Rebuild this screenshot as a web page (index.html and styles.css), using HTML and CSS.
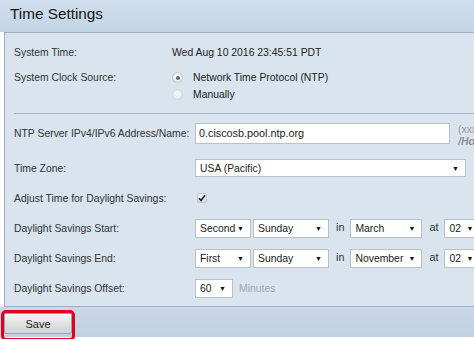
FILE: index.html
```html
<!DOCTYPE html>
<html>
<head>
<meta charset="utf-8">
<link rel="stylesheet" href="styles.css">
</head>
<body>
<div class="page">
  <div class="titlebar"><h1 class="title">Time Settings</h1></div>
  <div class="panel">
    <div class="sec-top">
      <div class="row-a">
        <span class="label-a">System Time:</span>
        <span class="value">Wed Aug 10 2016 23:45:51 PDT</span>
      </div>
      <div class="row-b">
        <span class="label-a">System Clock Source:</span>
        <div class="radios">
          <div class="radio-line"><span class="radio checked"></span><span>Network Time Protocol (NTP)</span></div>
          <div class="radio-line"><span class="radio"></span><span>Manually</span></div>
        </div>
      </div>
    </div>
    <div class="sep"></div>
    <div class="sec-bottom">
      <div class="row row-ntp">
        <span class="label">NTP Server IPv4/IPv6 Address/Name:</span>
        <span class="input">0.ciscosb.pool.ntp.org</span>
        <span class="hint"><span class="h1">(xxx.xxx.xxx.xxx</span><span class="h2">/Hostname)</span></span>
      </div>
      <div class="row">
        <span class="label">Time Zone:</span>
        <span class="select w-tz"><span>USA (Pacific)</span><span class="arr">▼</span></span>
      </div>
      <div class="row">
        <span class="label">Adjust Time for Daylight Savings:</span>
        <span class="check"><svg width="8" height="8" viewBox="0 0 8 8"><path d="M1 4.2 L3 6.4 L7 1.2" fill="none" stroke="#222" stroke-width="1.6"/></svg></span>
      </div>
      <div class="row">
        <span class="label">Daylight Savings Start:</span>
        <span class="select w-ord"><span>Second</span><span class="arr">▼</span></span>
        <span class="select w-day"><span>Sunday</span><span class="arr">▼</span></span>
        <span class="word">in</span>
        <span class="select w-mon"><span>March</span><span class="arr">▼</span></span>
        <span class="word">at</span>
        <span class="select w-hr"><span>02</span><span class="arr">▼</span></span>
      </div>
      <div class="row">
        <span class="label">Daylight Savings End:</span>
        <span class="select w-ord"><span>First</span><span class="arr">▼</span></span>
        <span class="select w-day"><span>Sunday</span><span class="arr">▼</span></span>
        <span class="word">in</span>
        <span class="select w-mon"><span>November</span><span class="arr">▼</span></span>
        <span class="word">at</span>
        <span class="select w-hr"><span>02</span><span class="arr">▼</span></span>
      </div>
      <div class="row">
        <span class="label">Daylight Savings Offset:</span>
        <span class="select w-off"><span>60</span><span class="arr">▼</span></span>
        <span class="unit">Minutes</span>
      </div>
    </div>
  </div>
  <div class="footer">
    <button class="save">Save</button>
    <span class="highlight"></span>
  </div>
</div>
</body>
</html>
```

FILE: styles.css
```css
html, body {
  margin: 0;
  padding: 0;
  background: #ffffff;
}
.page {
  position: relative;
  width: 474px;
  height: 339px;
  overflow: hidden;
  font-family: "Liberation Sans", Arial, sans-serif;
  font-size: 10.4px;
  color: #333;
}
.titlebar {
  height: 32px;
  background: linear-gradient(#d0deec, #c3d5e6);
}
.title {
  margin: 0;
  padding-left: 10px;
  font-size: 15.3px;
  font-weight: normal;
  line-height: 28px;
  color: #151515;
}
.panel {
  margin-left: 4px;
  margin-right: -20px;
  border: 1px solid #9eafc0;
  border-right: none;
  background: #d9e4ef;
}
.sec-top {
  padding: 11px 0 10px 9px;
}
.row-a {
  display: flex;
  align-items: center;
  height: 16px;
}
.row-b {
  display: flex;
  align-items: flex-start;
  margin-top: 9px;
}
.label-a {
  width: 158px;
  flex: none;
  line-height: 17px;
}
.value {
  color: #222;
}
.radios {
  display: flex;
  flex-direction: column;
}
.radio-line {
  display: flex;
  align-items: center;
  height: 17px;
  color: #222;
}
.radio {
  width: 9px;
  height: 9px;
  border-radius: 50%;
  border: 1px solid #c4c8cc;
  background: radial-gradient(circle at 50% 40%, #ffffff, #dadde0);
  margin-right: 10px;
  position: relative;
  flex: none;
}
.radio.checked::after {
  content: "";
  position: absolute;
  left: 2.5px;
  top: 2.5px;
  width: 4px;
  height: 4px;
  border-radius: 50%;
  background: #666;
}
.radio:not(.checked) {
  border-color: #d3d6da;
  background: radial-gradient(circle at 50% 40%, #f4f5f6, #e2e4e6);
}
.sep {
  margin-left: 9px;
  border-top: 1px solid #a9b6c3;
}
.sec-bottom {
  padding: 9px 0 7px 9px;
  display: flex;
  flex-direction: column;
  gap: 8px;
}
.row {
  display: flex;
  align-items: center;
  height: 22px;
  white-space: nowrap;
}
.row-ntp {
  align-items: flex-start;
  height: 26px;
}
.label {
  width: 181px;
  flex: none;
  line-height: 21px;
}
.input {
  box-sizing: border-box;
  width: 255px;
  height: 21px;
  line-height: 19px;
  padding-left: 3px;
  background: #fff;
  border: 1px solid #b9c0c8;
  color: #222;
  flex: none;
  font-size: 10.8px;
}
.hint {
  display: flex;
  flex-direction: column;
  margin-left: 8px;
  padding-top: 1px;
  line-height: 12px;
  font-size: 10.4px;
  color: #9a9a9a;
}
.hint .h2 {
  font-style: italic;
  font-weight: bold;
  color: #8a8f96;
}
.select {
  box-sizing: border-box;
  display: flex;
  align-items: center;
  justify-content: space-between;
  height: 19px;
  padding: 0 6px 0 4px;
  background: #fff;
  border: 1px solid #b9c0c8;
  color: #222;
  flex: none;
  font-size: 10.4px;
}
.arr {
  font-size: 7px;
  color: #111;
}
.w-tz { width: 271px; height: 18px; }
.w-ord { width: 56px; }
.w-day { width: 76px; margin-left: 2px; }
.w-mon { width: 72px; }
.w-hr { width: 36px; }
.w-off { width: 38px; }
.word {
  padding: 0 6px 0 7px;
  margin-top: -2px;
  color: #333;
  font-size: 10.8px;
}
.unit {
  margin-left: 6px;
  color: #a3a8ae;
}
.check {
  box-sizing: border-box;
  width: 10px;
  height: 10px;
  margin-left: 2px;
  border: 1px solid #c0c4c8;
  background: linear-gradient(#f4f4f4, #dcdcdc);
  border-radius: 2px;
  display: flex;
  align-items: center;
  justify-content: center;
}
.footer {
  position: relative;
  height: 30px;
  background: linear-gradient(#c9d8e7, #bfd1e3);
  padding-left: 4px;
  padding-top: 6px;
  box-sizing: border-box;
}
.save {
  display: block;
  width: 68px;
  height: 21px;
  margin: 0;
  padding: 0;
  font-family: "Liberation Sans", Arial, sans-serif;
  font-size: 11px;
  color: #222;
  border: 1px solid #98a6b4;
  border-radius: 2px;
  background: linear-gradient(#f7f7f7, #e2e2e2 50%, #cfd2d5);
}
.highlight {
  position: absolute;
  left: 1px;
  top: 3px;
  width: 74px;
  height: 31px;
  box-sizing: border-box;
  border: 3px solid #e2001a;
  border-radius: 5px;
}
```
